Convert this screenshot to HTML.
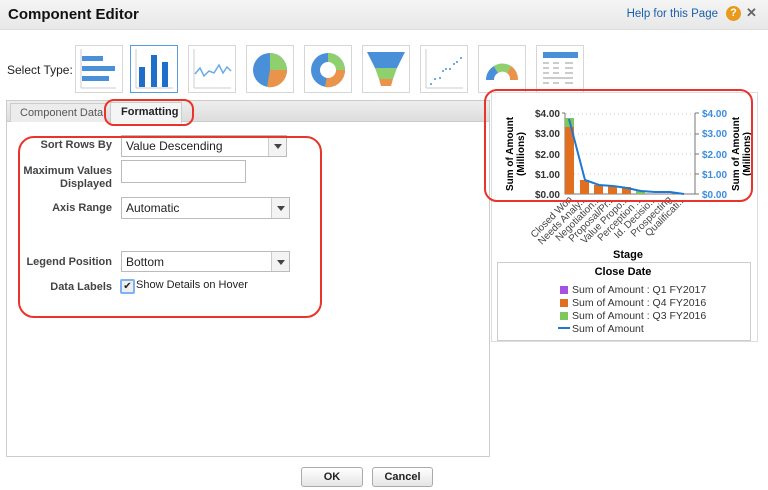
<!DOCTYPE html>
<html><head><meta charset="utf-8"><style>
*{box-sizing:border-box;margin:0;padding:0}
body{width:768px;height:490px;overflow:hidden;background:#fff;font-family:"Liberation Sans",Arial,sans-serif;font-size:11px;color:#222;position:relative}
.hdr{position:absolute;left:0;top:0;width:768px;height:30px;background:linear-gradient(#f4f4f4,#e8e8e8);border-bottom:1px solid #ddd}
.abs{position:absolute}
.ic{position:absolute;top:45px;width:48px;height:48px;border:1px solid #d6d6d6;background:#fff}
.lbl{position:absolute;right:656px;font-weight:bold;color:#444;text-align:right;font-size:11px;line-height:13px}
.sel{position:absolute;border:1px solid #bbb;background:#fff;font-size:12px;padding:3px 4px}
.sel .ar{position:absolute;right:0;top:0;bottom:0;width:18px;border-left:1px solid #ccc;background:#f3f3f3}
.sel .ar:after{content:"";position:absolute;left:5px;top:8px;border:4px solid transparent;border-top:5px solid #444}
.btn{position:absolute;top:467px;height:20px;border:1px solid #aaa;border-radius:3px;background:linear-gradient(#fff,#e5e5e5);font-weight:bold;font-size:11px;text-align:center;line-height:18px}
</style></head><body>
<div class="hdr"></div>
<div class="abs" style="left:8px;top:6px;font-size:15px;font-weight:bold;color:#111">Component Editor</div>
<div class="abs" style="right:50px;top:8px;font-size:11.5px;color:#1a5fa8;white-space:nowrap">Help for this Page</div>
<div class="abs" style="left:726px;top:6px;width:15px;height:15px;border-radius:50%;background:#e89a1c;color:#fff;font-weight:bold;font-size:11px;text-align:center;line-height:15px">?</div>
<div class="abs" style="left:746px;top:5px;font-size:13px;font-weight:bold;color:#666">✕</div>

<div class="abs" style="left:7px;top:63px;font-size:12px">Select Type:</div>
<div class="ic" style="left:75px"><svg width="46" height="46"><path d="M5 42H40M5 3V42" stroke="#ccc"/><rect x="6" y="10" width="21" height="5" fill="#4a90d9"/><rect x="6" y="20" width="33" height="5" fill="#4a90d9"/><rect x="6" y="30" width="27" height="5" fill="#4a90d9"/></svg></div>
<div class="ic" style="left:130px;border-color:#5b9be0"><svg width="46" height="46"><path d="M5 42H42M5 3V42" stroke="#ccc"/><rect x="8" y="21" width="6" height="20" fill="#1e6fc9"/><rect x="20" y="9" width="6" height="32" fill="#1e6fc9"/><rect x="31" y="16" width="6" height="25" fill="#1e6fc9"/></svg></div>
<div class="ic" style="left:188px"><svg width="46" height="46"><path d="M5 42H42M5 3V42" stroke="#ccc"/><path d="M6 28L11 22L15 30L20 25L25 27L30 19L34 27L38 21L42 25" fill="none" stroke="#6aaae8" stroke-width="1.5"/></svg></div>
<div class="ic" style="left:246px"><svg width="46" height="46"><circle cx="23" cy="24" r="17" fill="#4a90d9"/><path d="M23 24L23 7A17 17 0 0 1 40 24Z" fill="#8fcf6e"/><path d="M23 24L40 24A17 17 0 0 1 20 41Z" fill="#e9944a"/></svg></div>
<div class="ic" style="left:304px"><svg width="46" height="46"><circle cx="23" cy="24" r="17" fill="#4a90d9"/><path d="M23 24L23 7A17 17 0 0 1 40 24Z" fill="#8fcf6e"/><path d="M23 24L40 24A17 17 0 0 1 20 41Z" fill="#e9944a"/><circle cx="23" cy="24" r="8" fill="#fff"/></svg></div>
<div class="ic" style="left:362px"><svg width="46" height="46"><path d="M4 6H42L34 22H12Z" fill="#4a90d9"/><path d="M12 22H34L30 33H16Z" fill="#8fcf6e"/><path d="M16 33H30L28 40H18Z" fill="#e9944a"/></svg></div>
<div class="ic" style="left:420px"><svg width="46" height="46"><path d="M5 42H42M5 3V42" stroke="#ccc"/><g fill="#4a90d9"><circle cx="10" cy="38" r="1"/><circle cx="14" cy="33" r="1"/><circle cx="19" cy="32" r="1"/><circle cx="22" cy="25" r="1"/><circle cx="25" cy="23" r="1"/><circle cx="29" cy="23" r="1"/><circle cx="33" cy="18" r="1"/><circle cx="36" cy="16" r="1"/><circle cx="40" cy="12" r="1"/></g></svg></div>
<div class="ic" style="left:478px"><svg width="46" height="46"><path d="M7 34A16 16 0 0 1 15 20L19 27A8 8 0 0 0 15 34Z" fill="#4a90d9"/><path d="M15 20A16 16 0 0 1 32 20L28 27A8 8 0 0 0 19 27Z" fill="#8fcf6e"/><path d="M32 20A16 16 0 0 1 39 34L31 34A8 8 0 0 0 28 27Z" fill="#e9944a"/></svg></div>
<div class="ic" style="left:536px"><svg width="46" height="46"><rect x="6" y="6" width="35" height="6" fill="#4a90d9"/><g stroke="#bbb" stroke-width="1.5"><path d="M6 17H12M16 17H22M28 17H36M6 22H12M16 22H22M28 22H36M6 27H12M16 27H22M28 27H36M6 32H36M6 37H12M16 37H22M28 37H36"/></g></svg></div>

<div class="abs" style="left:6px;top:100px;width:484px;height:357px;border:1px solid #ccc;border-top:none"></div>
<div class="abs" style="left:6px;top:100px;width:484px;height:22px;background:linear-gradient(#eee,#ddd);border:1px solid #ccc"></div>
<div class="abs" style="left:10px;top:103px;width:96px;height:19px;background:#ececec;border:1px solid #ccc;border-bottom:none;font-size:11px;color:#555;padding:3px 0 0 9px">Component Data</div>
<div class="abs" style="left:110px;top:102px;width:72px;height:21px;background:#f5f5f5;border:1px solid #ccc;border-bottom:none;font-weight:bold;font-size:11px;padding:3px 0 0 10px">Formatting</div>
<div class="abs" style="left:104px;top:99px;width:90px;height:27px;border:2px solid #e8342a;border-radius:10px"></div>

<div class="lbl" style="top:139px">Sort Rows By</div>
<div class="sel" style="left:121px;top:135px;width:166px;height:22px">Value Descending<span class="ar"></span></div>
<div class="lbl" style="top:165px">Maximum Values<br>Displayed</div>
<div class="sel" style="left:121px;top:160px;width:125px;height:23px"></div>
<div class="lbl" style="top:202px">Axis Range</div>
<div class="sel" style="left:121px;top:197px;width:169px;height:22px">Automatic<span class="ar"></span></div>
<div class="lbl" style="top:256px">Legend Position</div>
<div class="sel" style="left:121px;top:251px;width:169px;height:21px">Bottom<span class="ar"></span></div>
<div class="lbl" style="top:281px">Data Labels</div>
<div class="abs" style="left:120px;top:279px;width:15px;height:15px;border:2px solid #7fb2f0;border-radius:2px;background:#eee;font-size:10px;text-align:center;line-height:11px">✔</div>
<div class="abs" style="left:136px;top:279px;font-size:11px">Show Details on Hover</div>
<div class="abs" style="left:18px;top:136px;width:304px;height:182px;border:2px solid #e8342a;border-radius:16px"></div>

<div class="abs" style="left:491px;top:92px;width:267px;height:250px;border:1px solid #ddd"></div>
<svg class="abs" style="left:0;top:0" width="768" height="490" font-family="Liberation Sans,Arial,sans-serif">
<g font-size="10" font-weight="bold" fill="#333" text-anchor="end">
<text x="560" y="117">$4.00</text><text x="560" y="137">$3.00</text><text x="560" y="158">$2.00</text><text x="560" y="178">$1.00</text><text x="560" y="198">$0.00</text></g>
<g font-size="10" font-weight="bold" fill="#3a8de0"><text x="702" y="117">$4.00</text><text x="702" y="137">$3.00</text><text x="702" y="158">$2.00</text><text x="702" y="178">$1.00</text><text x="702" y="198">$0.00</text></g>
<path d="M565 113V194H695M695 113V194M562 113H565M695 113H699M695 134H699M695 154H699M695 174H699M695 194H699" stroke="#777" fill="none"/>
<g stroke="#ccc" stroke-dasharray="1 3"><path d="M566 114H694M566 134H694M566 154H694M566 174H694"/></g>
<g fill="#e07020">
<rect x="565" y="119" width="9" height="75"/><rect x="580" y="180" width="9" height="14"/><rect x="594" y="185" width="9" height="9"/><rect x="608" y="186" width="9" height="8"/><rect x="622" y="187" width="9" height="7"/></g>
<rect x="565" y="118" width="9" height="9" fill="#7cc85a"/><rect x="636" y="191" width="9" height="3" fill="#7cc85a"/>
<polyline points="569,119 585,180 599,185 613,186 627,188 641,191 655,192 670,192 684,194" fill="none" stroke="#1f78d1" stroke-width="2"/>
<text transform="translate(513,154) rotate(-90)" text-anchor="middle" font-size="10" font-weight="bold">Sum of Amount</text>
<text transform="translate(524,154) rotate(-90)" text-anchor="middle" font-size="10" font-weight="bold">(Millions)</text>
<text transform="translate(739,154) rotate(-90)" text-anchor="middle" font-size="10" font-weight="bold">Sum of Amount</text>
<text transform="translate(750,154) rotate(-90)" text-anchor="middle" font-size="10" font-weight="bold">(Millions)</text>
<g font-size="10" fill="#444" text-anchor="end">
<text transform="translate(573,200) rotate(-45)">Closed Won</text>
<text transform="translate(587,200) rotate(-45)">Needs Analy...</text>
<text transform="translate(601,200) rotate(-45)">Negotiation...</text>
<text transform="translate(615,200) rotate(-45)">Proposal/Pr...</text>
<text transform="translate(629,200) rotate(-45)">Value Propo...</text>
<text transform="translate(643,200) rotate(-45)">Perception ...</text>
<text transform="translate(657,200) rotate(-45)">Id. Decisio...</text>
<text transform="translate(672,200) rotate(-45)">Prospecting</text>
<text transform="translate(686,200) rotate(-45)">Qualificati...</text></g>
<text x="628" y="258" text-anchor="middle" font-size="11" font-weight="bold">Stage</text>
<rect x="497.5" y="262.5" width="253" height="78" fill="none" stroke="#ccc"/>
<text x="623" y="275" text-anchor="middle" font-size="11" font-weight="bold">Close Date</text>
<g font-size="10.5" fill="#333">
<rect x="560" y="286" width="8" height="8" fill="#a552e0"/><text x="572" y="293">Sum of Amount : Q1 FY2017</text>
<rect x="560" y="299" width="8" height="8" fill="#e07020"/><text x="572" y="306">Sum of Amount : Q4 FY2016</text>
<rect x="560" y="312" width="8" height="8" fill="#7cc85a"/><text x="572" y="319">Sum of Amount : Q3 FY2016</text>
<path d="M558 328H570" stroke="#1f78d1" stroke-width="2"/><text x="572" y="332">Sum of Amount</text></g>
<rect x="485" y="90" width="267" height="111" rx="12" fill="none" stroke="#e8342a" stroke-width="2"/>
</svg>

<div class="btn" style="left:301px;width:62px">OK</div>
<div class="btn" style="left:372px;width:61px">Cancel</div>
</body></html>
